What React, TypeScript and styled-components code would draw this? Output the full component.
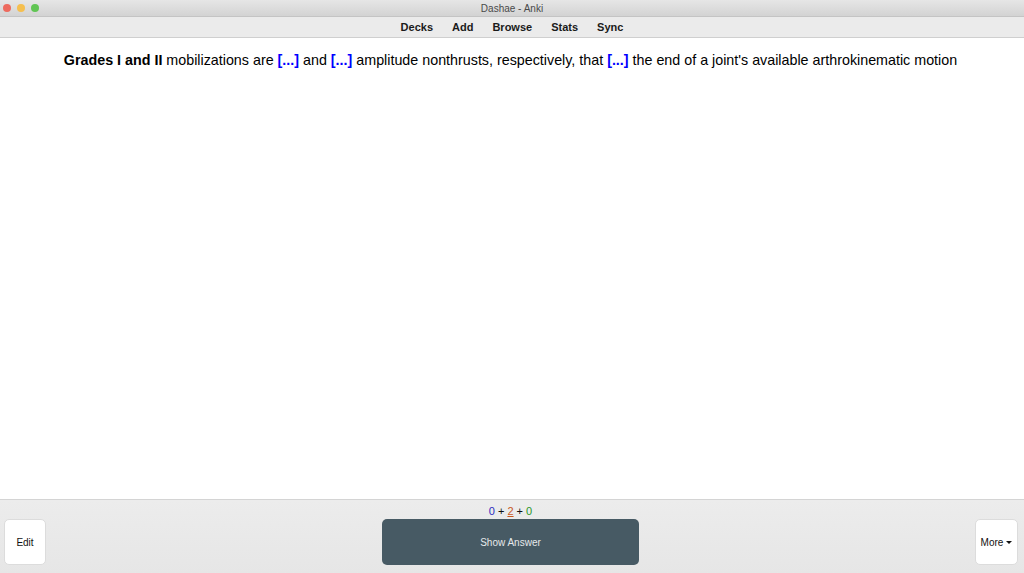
import React from 'react';
import styled, { createGlobalStyle } from 'styled-components';

const Global = createGlobalStyle`
  html, body {
    margin: 0;
    padding: 0;
    height: 100%;
    overflow: hidden;
  }
  #root {
    height: 100%;
  }
  body {
    font-family: "Liberation Sans", Arial, sans-serif;
    background: #fff;
  }
`;

const Window = styled.div`
  width: 1024px;
  height: 573px;
  display: flex;
  flex-direction: column;
  background: #fff;
`;

const TitleBar = styled.div`
  position: relative;
  height: 16px;
  background: linear-gradient(#e6e6e6, #d3d3d3);
  border-bottom: 1px solid #c4c4c4;
  display: flex;
  align-items: center;
  justify-content: center;
  flex-shrink: 0;
`;

const Lights = styled.div`
  position: absolute;
  left: 3px;
  top: 4px;
  display: flex;
  gap: 6px;
`;

const Light = styled.span<{ $color: string }>`
  width: 8px;
  height: 8px;
  border-radius: 50%;
  background: ${p => p.$color};
`;

const Title = styled.span`
  font-size: 10px;
  color: #4a4a4a;
`;

const Toolbar = styled.div`
  height: 20px;
  background: #ebebeb;
  border-bottom: 1px solid #cfcfcf;
  display: flex;
  align-items: center;
  justify-content: center;
  gap: 19px;
  flex-shrink: 0;
`;

const NavLink = styled.span`
  font-size: 11px;
  font-weight: bold;
  color: #1a1a1a;
`;

const Card = styled.div`
  flex: 1;
  background: #fff;
  text-align: center;
  padding-top: 13px;
  padding-right: 3px;
  font-size: 14.3px;
  color: #000;
  line-height: 18px;
`;

const Cloze = styled.span`
  font-weight: bold;
  color: #0000ff;
`;

const Bottom = styled.div`
  box-sizing: border-box;
  height: 74px;
  background: linear-gradient(#ececec, #e6e6e6);
  border-top: 1px solid #d4d4d4;
  display: flex;
  align-items: flex-end;
  justify-content: space-between;
  padding: 0 6px 8px 4px;
  flex-shrink: 0;
`;

const SideButton = styled.div<{ $width: number }>`
  width: ${p => p.$width}px;
  height: 46px;
  box-sizing: border-box;
  background: #fff;
  border: 1px solid #dcdcdc;
  border-radius: 5px;
  display: flex;
  align-items: center;
  justify-content: center;
  font-size: 10px;
  color: #111;
`;

const Middle = styled.div`
  display: flex;
  flex-direction: column;
  align-items: center;
  gap: 1px;
`;

const Counts = styled.div`
  font-size: 11px;
  color: #111;
  line-height: 14px;
`;

const Count = styled.span<{ $color: string; $under?: boolean }>`
  color: ${p => p.$color};
  text-decoration: ${p => (p.$under ? 'underline' : 'none')};
`;

const AnswerButton = styled.div`
  width: 257px;
  height: 46px;
  background: #475a64;
  border-radius: 5px;
  display: flex;
  align-items: center;
  justify-content: center;
  color: #e6e9eb;
  font-size: 10px;
`;

const Caret = styled.span`
  display: inline-block;
  margin-left: 3px;
  border-left: 3px solid transparent;
  border-right: 3px solid transparent;
  border-top: 3px solid #111;
  vertical-align: middle;
`;

export default function App() {
  return (
    <Window>
      <Global />
      <TitleBar>
        <Lights>
          <Light $color="#ed6a5e" />
          <Light $color="#f5bf4f" />
          <Light $color="#61c554" />
        </Lights>
        <Title>Dashae - Anki</Title>
      </TitleBar>
      <Toolbar>
        <NavLink>Decks</NavLink>
        <NavLink>Add</NavLink>
        <NavLink>Browse</NavLink>
        <NavLink>Stats</NavLink>
        <NavLink>Sync</NavLink>
      </Toolbar>
      <Card>
        <b>Grades I and II</b> mobilizations are <Cloze>[...]</Cloze> and <Cloze>[...]</Cloze> amplitude
        nonthrusts, respectively, that <Cloze>[...]</Cloze> the end of a joint's available arthrokinematic motion
      </Card>
      <Bottom>
        <SideButton $width={42}>Edit</SideButton>
        <Middle>
          <Counts>
            <Count $color="#2b2bc0">0</Count> + <Count $color="#c8581f" $under>2</Count> +{' '}
            <Count $color="#2a962a">0</Count>
          </Counts>
          <AnswerButton>Show Answer</AnswerButton>
        </Middle>
        <SideButton $width={43}>
          More
          <Caret />
        </SideButton>
      </Bottom>
    </Window>
  );
}
